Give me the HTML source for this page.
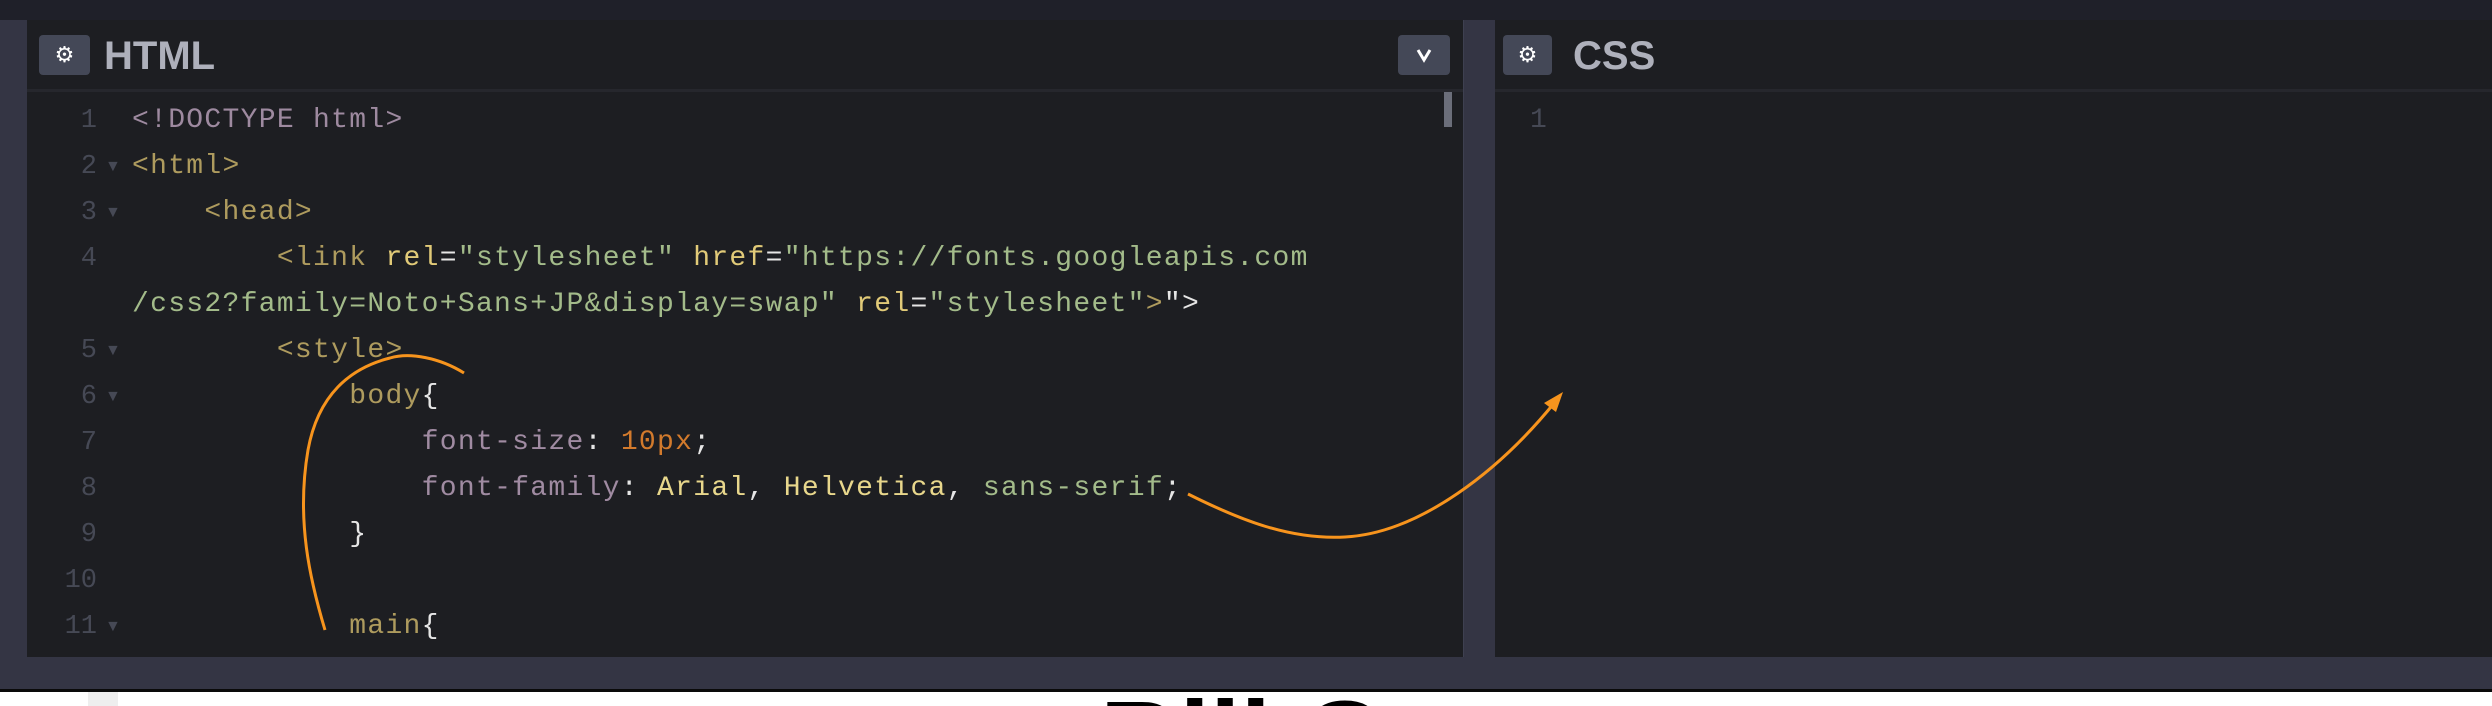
<!DOCTYPE html>
<html><head><style>
html,body{margin:0;width:2492px;height:706px;overflow:hidden}
body{background:#fff;position:relative;font-family:"Liberation Sans",sans-serif}
.abs{position:absolute}
.code{font-family:"Liberation Mono",monospace;font-size:28px;letter-spacing:1.3px;white-space:pre;line-height:46px}
.ln{position:absolute;left:0;width:70px;text-align:right;color:#464955;font-family:"Liberation Mono",monospace;font-size:27px;line-height:46px}
.fa{position:absolute;left:78px;color:#464955;font-size:16px;line-height:46px}
.t{color:#ae9b5e}.d{color:#9e8aa0}.a{color:#e1ca78}.s{color:#a3bb8a}.w{color:#e6e6e6}.p{color:#a08ba2}.n{color:#d27a2c}.v{color:#e8d78c}
.btn{position:absolute;background:#444857;border-radius:4px}
</style></head><body>
<div class="abs" style="left:0;top:0;width:2492px;height:20px;background:#1f2029"></div>
<div class="abs" style="left:0;top:20px;width:27px;height:637px;background:#343544"></div>
<div class="abs" style="left:27px;top:20px;width:1436px;height:637px;background:#1d1e22"></div>
<div class="abs" style="left:1463px;top:20px;width:32px;height:637px;background:#343544;border-left:1px solid #3e4050"></div>
<div class="abs" style="left:1495px;top:20px;width:997px;height:637px;background:#1d1e22"></div>
<div class="abs" style="left:27px;top:89px;width:1436px;height:3px;background:#26272d"></div>
<div class="abs" style="left:1495px;top:89px;width:997px;height:3px;background:#26272d"></div>
<div class="btn" style="left:39px;top:35px;width:51px;height:40px"></div>
<div class="abs" style="left:39px;top:35px;width:51px;height:40px;color:#fff;font-size:22px;line-height:40px;text-align:center">⚙</div>
<div class="abs" style="left:104px;top:33px;color:#aeb0bb;font-weight:bold;font-size:40px;line-height:46px">HTML</div>
<div class="btn" style="left:1398px;top:35px;width:52px;height:40px"></div>
<svg class="abs" style="left:1398px;top:35px" width="52" height="40"><path d="M20 15 L26 25 L32 15" stroke="#fff" stroke-width="3" fill="none"/></svg>
<div class="abs" style="left:1444px;top:92px;width:8px;height:35px;background:#6b6e7a"></div>
<div class="btn" style="left:1503px;top:35px;width:49px;height:40px"></div>
<div class="abs" style="left:1503px;top:35px;width:49px;height:40px;color:#fff;font-size:22px;line-height:40px;text-align:center">⚙</div>
<div class="abs" style="left:1573px;top:33px;color:#aeb0bb;font-weight:bold;font-size:40px;line-height:46px">CSS</div>
<div class="abs code" style="left:1530px;top:98px;color:#464955">1</div>
<div class="abs" style="left:27px;top:98px;width:1410px;height:559px;overflow:hidden">
<div class="ln" style="top:0">1</div>
<div class="ln" style="top:46px">2</div><div class="fa" style="top:46px">▼</div>
<div class="ln" style="top:92px">3</div><div class="fa" style="top:92px">▼</div>
<div class="ln" style="top:138px">4</div>
<div class="ln" style="top:230px">5</div><div class="fa" style="top:230px">▼</div>
<div class="ln" style="top:276px">6</div><div class="fa" style="top:276px">▼</div>
<div class="ln" style="top:322px">7</div>
<div class="ln" style="top:368px">8</div>
<div class="ln" style="top:414px">9</div>
<div class="ln" style="top:460px">10</div>
<div class="ln" style="top:506px">11</div><div class="fa" style="top:506px">▼</div>
<div class="ln" style="top:552px">12</div>
<div class="abs code" style="left:105px;top:0"><span class="d">&lt;!DOCTYPE html&gt;</span>
<span class="t">&lt;html&gt;</span>
    <span class="t">&lt;head&gt;</span>
        <span class="t">&lt;link</span> <span class="a">rel</span><span class="w">=</span><span class="s">"stylesheet"</span> <span class="a">href</span><span class="w">=</span><span class="s">"https://fonts.googleapis.com</span>
<span class="s">/css2?family=Noto+Sans+JP&amp;display=swap"</span> <span class="a">rel</span><span class="w">=</span><span class="s">"stylesheet"</span><span class="t">&gt;</span><span class="w">"&gt;</span>
        <span class="t">&lt;style&gt;</span>
            <span class="t">body</span><span class="w">{</span>
                <span class="p">font-size</span><span class="w">:</span> <span class="n">10px</span><span class="w">;</span>
                <span class="p">font-family</span><span class="w">:</span> <span class="v">Arial</span><span class="w">,</span> <span class="v">Helvetica</span><span class="w">,</span> <span class="s">sans-serif</span><span class="w">;</span>
            <span class="w">}</span>

            <span class="t">main</span><span class="w">{</span>
                <span class="p">margin</span><span class="w">:</span> <span class="n">40px 10px 0 40px</span></div>
</div>
<div class="abs" style="left:0;top:657px;width:2492px;height:32px;background:#343544"></div>
<div class="abs" style="left:0;top:689px;width:2492px;height:3px;background:#0a0a0a"></div>
<div class="abs" style="left:88px;top:692px;width:30px;height:14px;background:#eee"></div>
<div class="abs" style="left:1100px;top:692px;height:14px;width:600px;overflow:hidden"><div style="position:absolute;top:-6px;font-size:110px;font-weight:bold;line-height:110px;color:#000;white-space:nowrap">Bill Gates</div></div>
<svg class="abs" style="left:0;top:0" width="2492" height="706">
<path d="M464 373 C440 358 410 352 390 358 C350 368 318 395 308 450 C296 520 310 580 325 630" stroke="#f7941d" stroke-width="3" fill="none"/>
<path d="M1188 494 C1240 520 1290 540 1345 537 C1420 533 1500 470 1555 402" stroke="#f7941d" stroke-width="3" fill="none"/>
<path d="M1563 392 L1544 403 L1556 412 Z" fill="#f7941d"/>
</svg>
</body></html>
